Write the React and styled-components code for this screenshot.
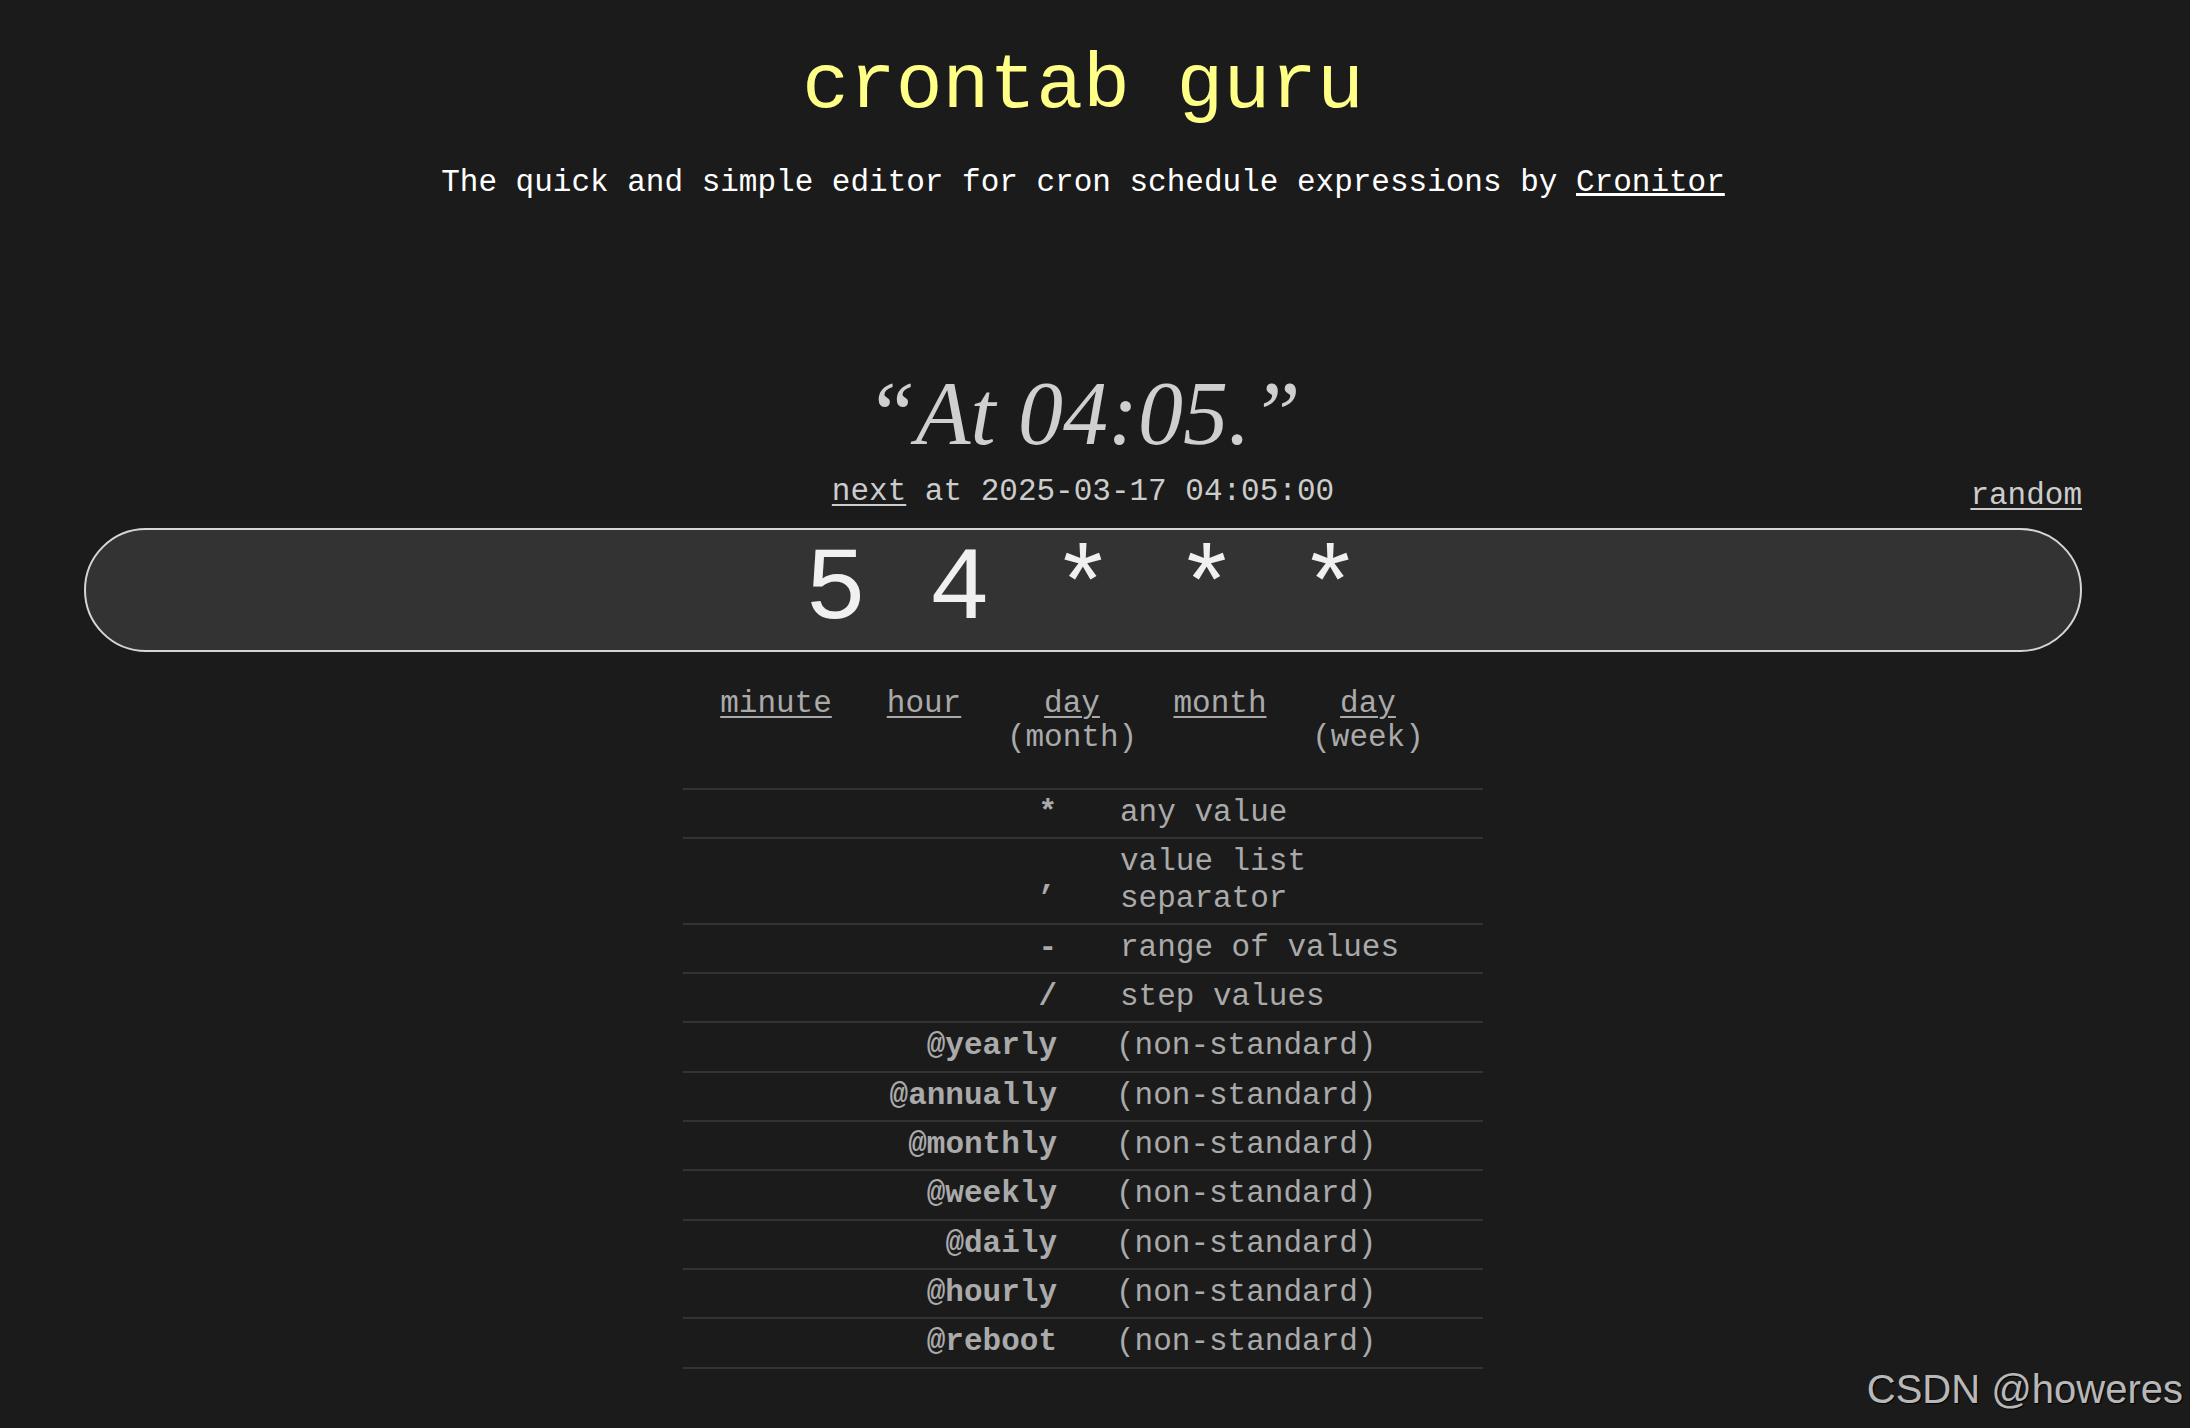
import React from "react";
import styled, { createGlobalStyle } from "styled-components";

const GlobalStyle = createGlobalStyle`
  html, body {
    margin: 0;
    background: #1b1b1b;
  }
  body {
    font-family: "Liberation Mono", "Courier New", monospace;
    color: #ccc;
  }
`;

const Page = styled.div`
  position: relative;
  min-height: 1428px;
  box-sizing: border-box;
  padding: 47px 108px 0 84px;
`;

const Title = styled.h1`
  margin: 0;
  font-size: 78px;
  line-height: 78px;
  font-weight: normal;
  text-align: center;
  color: #ffff88;
`;

const Tagline = styled.p`
  margin: 39px 0 0;
  font-size: 31px;
  line-height: 37px;
  text-align: center;
  color: #fff;

  a {
    color: #fff;
  }
`;

const Human = styled.div`
  margin-top: 168px;
  font-family: "Liberation Serif", "Times New Roman", serif;
  font-style: italic;
  font-size: 90px;
  line-height: 90px;
  text-align: center;
  color: #cfcfcf;
`;

const NextRow = styled.div`
  display: grid;
  grid-template-columns: 1fr auto 1fr;
  align-items: start;
  margin-top: 16px;
  font-size: 31px;
  line-height: 34px;
  color: #ccc;
`;

const NextText = styled.div`
  grid-column: 2;
  white-space: nowrap;
`;

const Link = styled.a`
  color: #ccc;
  text-decoration: underline;
  text-decoration-thickness: 2px;
  text-underline-offset: 4px;
`;

const Random = styled(Link)`
  grid-column: 3;
  justify-self: end;
  margin-top: 4px;
`;

const Expression = styled.div`
  margin-top: 15px;
  height: 124px;
  box-sizing: border-box;
  border: 2px solid #d6d6d6;
  border-radius: 62px;
  background: #333;
  display: flex;
  align-items: center;
  justify-content: center;
  font-size: 103px;
  color: #f0f0f0;
  white-space: pre;
`;

const Parts = styled.div`
  display: grid;
  grid-template-columns: repeat(5, 148px);
  justify-content: center;
  padding-right: 22px;
  margin-top: 35px;
  font-size: 31px;
  line-height: 34px;
  color: #aaa;
`;

const Part = styled.div`
  display: flex;
  flex-direction: column;
  align-items: center;
`;

const PartName = styled.span`
  text-decoration: underline;
  text-decoration-thickness: 2px;
  text-underline-offset: 4px;
`;

const Legend = styled.div`
  width: 800px;
  margin: 33px auto 0;
  border-top: 2px solid #333;
  font-size: 31px;
  line-height: 36.3px;
  color: #aaa;
`;

const LegendRow = styled.div`
  display: grid;
  grid-template-columns: 405px 395px;
  align-items: center;
  padding: 5px 0 6px;
  border-bottom: 2px solid #333;
`;

const Symbol = styled.div`
  text-align: right;
  padding-right: 31px;
  font-weight: bold;
`;

const Meaning = styled.div`
  padding-left: ${(p) => (p.$paren ? "28px" : "32px")};
`;

const Watermark = styled.div`
  position: absolute;
  right: 7px;
  bottom: 16px;
  font-family: "Liberation Sans", Arial, sans-serif;
  font-size: 40px;
  line-height: 46px;
  color: #b8b8b8;
  text-shadow: 1px 1px 1px #000;
`;

const parts = [
  { name: "minute" },
  { name: "hour" },
  { name: "day", sub: "(month)" },
  { name: "month" },
  { name: "day", sub: "(week)" },
];

const legend = [
  ["*", "any value"],
  [",", "value list separator"],
  ["-", "range of values"],
  ["/", "step values"],
  ["@yearly", "(non-standard)"],
  ["@annually", "(non-standard)"],
  ["@monthly", "(non-standard)"],
  ["@weekly", "(non-standard)"],
  ["@daily", "(non-standard)"],
  ["@hourly", "(non-standard)"],
  ["@reboot", "(non-standard)"],
];

export default function App() {
  return (
    <>
      <GlobalStyle />
      <Page>
        <Title>crontab guru</Title>
        <Tagline>
          The quick and simple editor for cron schedule expressions by{" "}
          <a href="#">Cronitor</a>
        </Tagline>

        <Human>“At 04:05.”</Human>

        <NextRow>
          <NextText>
            <Link href="#">next</Link> at 2025-03-17 04:05:00
          </NextText>
          <Random href="#">random</Random>
        </NextRow>

        <Expression>5 4 * * *</Expression>

        <Parts>
          {parts.map((p, i) => (
            <Part key={i}>
              <PartName>{p.name}</PartName>
              {p.sub && <span>{p.sub}</span>}
            </Part>
          ))}
        </Parts>

        <Legend>
          {legend.map(([sym, text]) => (
            <LegendRow key={sym}>
              <Symbol>{sym}</Symbol>
              <Meaning $paren={text.startsWith("(")}>{text}</Meaning>
            </LegendRow>
          ))}
        </Legend>

        <Watermark>CSDN @howeres</Watermark>
      </Page>
    </>
  );
}
